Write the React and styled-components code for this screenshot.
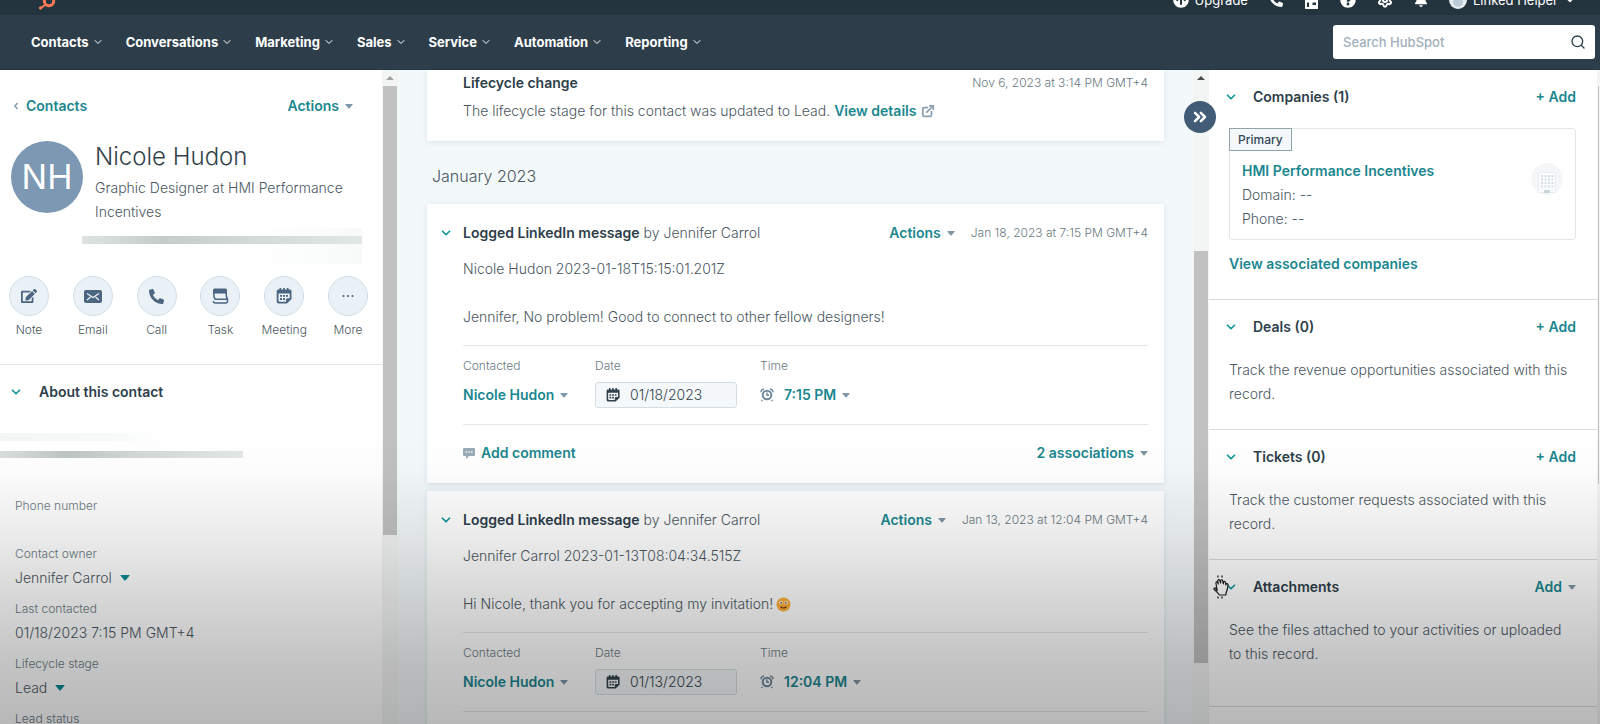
import React from "react";
import styled, { createGlobalStyle } from "styled-components";
import { FaEdit, FaPhoneAlt, FaArrowCircleUp, FaQuestionCircle, FaBell } from "react-icons/fa";
import { ChevronDown, ChevronLeft, ChevronsRight, ExternalLink, Search, Settings } from "lucide-react";

const menus = ["Contacts", "Conversations", "Marketing", "Sales", "Service", "Automation", "Reporting"];

const messages = [
  {
    id: "jan18",
    logged: "Jan 18, 2023 at 7:15 PM GMT+4",
    lead: "Nicole Hudon 2023-01-18T15:15:01.201Z",
    text: "Jennifer, No problem! Good to connect to other fellow designers!",
    date: "01/18/2023",
    time: "7:15 PM",
  },
  {
    id: "jan13",
    logged: "Jan 13, 2023 at 12:04 PM GMT+4",
    lead: "Jennifer Carrol 2023-01-13T08:04:34.515Z",
    text: "Hi Nicole, thank you for accepting my invitation!",
    smile: true,
    date: "01/13/2023",
    time: "12:04 PM",
  },
];

const Caret = ({ big, color = "#7f97a8" }) => (
  <svg width={big ? 10 : 8} height={big ? 6 : 5} viewBox="0 0 10 6" fill={color} aria-hidden="true">
    <path d="M1 0h8q1 0 .4.8L5.7 5.2q-.7.7-1.4 0L.6.8Q0 0 1 0z" />
  </svg>
);

const CalendarIcon = ({ size = 16 }) => (
  <svg width={size} height={size} viewBox="0 0 16 16" aria-hidden="true">
    <path
      fill="currentColor"
      fillRule="evenodd"
      d="M3.5 0h1.6v1.6h2V0h1.7v1.6h2V0h1.7v1.6H14q1.5 0 1.5 1.5V11L11 15.5H2.5Q.7 15.5.7 13.7V3.1Q.7 1.6 2.2 1.6h1.3zM2.5 5.5v7q0 1.2 1.2 1.2H10v-2q0-1.5 1.5-1.5h2.2V5.5z"
    />
    <path fill="currentColor" d="M4 7h2v1.8H4zM7 7h2v1.8H7zM10 7h2v1.8h-2zM4 10h2v2H4zM7 10h2v2H7z" />
  </svg>
);

const EmailIcon = () => (
  <svg width="18" height="13" viewBox="0 0 18 13" aria-hidden="true">
    <rect width="18" height="13" rx="2" fill="currentColor" />
    <path d="M3 3.5l6 4 6-4M3 10l3.5-3M15 10l-3.5-3" fill="none" stroke="#eaf0f6" strokeWidth="1.3" />
  </svg>
);

const TaskIcon = () => (
  <svg width="17" height="16" viewBox="0 0 17 16" aria-hidden="true">
    <path d="M2.5.5h11q1.5 0 1.5 1.5v3.5H1V2Q1 .5 2.5.5z" fill="currentColor" />
    <path
      d="M1.8 5q-.2 4 1.2 6.3H15.5M14.2 5q-.2 3.5 1.3 6.3.6 3.7-2 3.7H3.5Q1.5 15 1 13.3"
      fill="none"
      stroke="currentColor"
      strokeWidth="1.5"
    />
  </svg>
);

const MoreIcon = () => (
  <svg width="12" height="4" viewBox="0 0 12 4" fill="currentColor" aria-hidden="true">
    <circle cx="1.5" cy="2" r="1.1" />
    <circle cx="6" cy="2" r="1.1" />
    <circle cx="10.5" cy="2" r="1.1" />
  </svg>
);

const AlarmIcon = () => (
  <svg width="14" height="14" viewBox="0 0 14 14" fill="none" stroke="#71889b" aria-hidden="true">
    <circle cx="7" cy="7" r="4.3" strokeWidth="2" />
    <path d="M7 4.5V7.3h2M1 4.3Q1 1.3 4 1M13 4.3Q13 1.3 10 1M2.5 12l-1 1M11.5 12l1 1" strokeWidth="1.4" />
  </svg>
);

const CommentIcon = () => (
  <svg width="12" height="11" viewBox="0 0 12 11" aria-hidden="true">
    <path d="M1 0h10q1 0 1 1v6q0 1-1 1H6l-3 3V8H1Q0 8 0 7V1q0-1 1-1z" fill="#9aabb8" />
    <path d="M2.5 4H4M5.3 4h1.5M8 4h1.5" stroke="#fff" strokeWidth="1.3" />
  </svg>
);

const SmileIcon = () => (
  <svg width="15" height="15" viewBox="0 0 15 15" role="img" aria-label="Smile">
    <circle cx="7.5" cy="7.5" r="7" fill="#ffb03a" />
    <circle cx="5" cy="5.6" r="1.7" fill="#fff" />
    <circle cx="10" cy="5.6" r="1.7" fill="#fff" />
    <circle cx="5.2" cy="5.8" r=".8" fill="#4b2d12" />
    <circle cx="9.8" cy="5.8" r=".8" fill="#4b2d12" />
    <path d="M4.5 9.8q3 2.4 6 0" fill="none" stroke="#6b3a12" strokeWidth="1.2" />
  </svg>
);

const BuildingIcon = () => (
  <svg width="32" height="32" viewBox="0 0 32 32" aria-hidden="true">
    <circle cx="16" cy="16" r="16" fill="#f5f6f7" />
    <rect x="7.5" y="9.5" width="17" height="20" rx="1" fill="#fbfcfd" stroke="#e8edf0" />
    <path d="M10 13h13M10 16.5h13M10 20h13M10 23.5h13" stroke="#d5dee4" strokeWidth="2" strokeDasharray="2 1.5" />
    <path d="M13 27h6v3h-6z" fill="#c9d3da" />
  </svg>
);

const MarketIcon = () => (
  <svg width="15" height="17" viewBox="0 0 15 17" aria-hidden="true">
    <path
      d="M1 1h13v7H1zM1 8h13v9H1zM3 10.5V15h2v-4.500zM8.500 10.500V13H12v-2.500z"
      fill="currentColor"
      fillRule="evenodd"
    />
  </svg>
);

const Sprocket = () => (
  <svg width="20" height="24" viewBox="0 0 20 24" fill="none" stroke="#ff7a59" aria-hidden="true">
    <circle cx="12" cy="15" r="4.7" strokeWidth="3" />
    <path d="M12 10V4M8.5 18.5L4 22M8.5 12L1.5 6" strokeWidth="2" />
    <circle cx="12" cy="3" r="1.5" fill="#ff7a59" />
    <circle cx="3.5" cy="22" r="1.2" fill="#ff7a59" />
  </svg>
);

const GrabHand = () => (
  <svg width="16" height="24" viewBox="0 0 16 24" aria-hidden="true">
    <path d="M4 1.5h2M8 1.5h2M4 22.5h2M8 22.5h2" stroke="#6d7276" strokeWidth="2" />
    <path
      d="M4.2 15.5L3 8.5Q2.8 6.5 4.2 6.5L5.3 9 4.8 6q.2-1.7 1.8-1.2L7.7 8 7.6 5.6q.6-1.4 1.9-.5L10.3 9l.2-2q1-1.2 1.9.2l.4 2.8.6-1.2q1.3-.5 1.6.9-.2 4-1.6 7.3L12.7 20H6.5Q4 16.8 1 14.3q-.3-1.6 1.3-1.5z"
      fill="#fff"
      stroke="#1d1d1d"
      strokeWidth="1.2"
      strokeLinejoin="round"
    />
  </svg>
);

const ScrollBar = ({ parts, dark, children }) => (
  <Track $parts={parts}>
    <Arrow $dark={dark} />
    <span />
    <Thumb />
    {children}
  </Track>
);

const actions = [
  ["Note", <FaEdit size={16} />],
  ["Email", <EmailIcon />],
  ["Call", <FaPhoneAlt size={15} />],
  ["Task", <TaskIcon />],
  ["Meeting", <CalendarIcon size={16} />],
  ["More", <MoreIcon />],
];

const Property = ({ label, value, menu }) => (
  <PropertyItem>
    <Label as="dt">{label}</Label>
    <PropertyValue $empty={!value}>
      {menu ? (
        <PlainButton>
          {value}
          <Caret big color="#078a92" />
        </PlainButton>
      ) : (
        value
      )}
    </PropertyValue>
  </PropertyItem>
);

const Message = ({ item }) => (
  <Card>
    <Toggle aria-label="Collapse message">
      <ChevronDown size={14} strokeWidth={3} />
    </Toggle>
    <CardContent>
      <CardHeader>
        <p>
          <strong>Logged LinkedIn message</strong> by Jennifer Carrol
        </p>
        <CardMeta>
          <LinkButton>
            Actions
            <Caret />
          </LinkButton>
          <Stamp>{item.logged}</Stamp>
        </CardMeta>
      </CardHeader>
      <MessageBody>
        <p>{item.lead}</p>
        <MessageText>
          {item.text}
          {item.smile && <SmileIcon />}
        </MessageText>
      </MessageBody>
      <Fields>
        <div>
          <Label>Contacted</Label>
          <FieldValue>
            <LinkButton>
              Nicole Hudon
              <Caret />
            </LinkButton>
          </FieldValue>
        </div>
        <div>
          <Label as="label" htmlFor={item.id}>
            Date
          </Label>
          <DateBox>
            <CalendarIcon size={14} />
            <DateInput id={item.id} defaultValue={item.date} />
          </DateBox>
        </div>
        <div>
          <Label>Time</Label>
          <FieldValue>
            <AlarmIcon />
            <LinkButton>
              {item.time}
              <Caret />
            </LinkButton>
          </FieldValue>
        </div>
      </Fields>
      <CardFooter>
        <LinkButton>
          <CommentIcon />
          Add comment
        </LinkButton>
        <LinkButton>
          2 associations
          <Caret />
        </LinkButton>
      </CardFooter>
    </CardContent>
  </Card>
);

const SideSection = ({ title, menu, tall, children }) => (
  <Section $tall={tall}>
    <SectionHeader>
      <Toggle aria-label={`Toggle ${title}`}>
        <ChevronDown size={14} strokeWidth={3} />
      </Toggle>
      <h2>{title}</h2>
      <LinkButton>
        {menu ? "Add" : "+ Add"}
        {menu && <Caret />}
      </LinkButton>
    </SectionHeader>
    <SectionBody>{children}</SectionBody>
  </Section>
);

const App = () => {
  return (
    <Page>
      <GlobalStyle />
      <TopBar>
        <Sprocket />
        <Tools>
          <Tool>
            <FaArrowCircleUp size={16} />
            Upgrade
          </Tool>
          <Tool aria-label="Calling">
            <FaPhoneAlt size={14} />
          </Tool>
          <Tool aria-label="Marketplace">
            <MarketIcon />
          </Tool>
          <Tool aria-label="Help">
            <FaQuestionCircle size={16} />
          </Tool>
          <Tool aria-label="Settings">
            <Settings size={16} strokeWidth={3} />
          </Tool>
          <Tool aria-label="Notifications">
            <FaBell size={14} />
          </Tool>
          <Tool>
            <UserDot />
            Linked Helper
            <ChevronDown size={12} strokeWidth={3} />
          </Tool>
        </Tools>
      </TopBar>
      <NavBar>
        <Menus>
          {menus.map((name) => (
            <MenuButton key={name}>
              {name}
              <ChevronDown size={12} strokeWidth={2} />
            </MenuButton>
          ))}
        </Menus>
        <SearchBox>
          <input type="text" aria-label="Search HubSpot" placeholder="Search HubSpot" />
          <Search size={16} strokeWidth={2} />
        </SearchBox>
      </NavBar>

      <Body>
        <Panel>
          <PanelTop>
            <BackLink href="#contacts">
              <ChevronLeft size={10} strokeWidth={3} />
              Contacts
            </BackLink>
            <LinkButton>
              Actions
              <Caret />
            </LinkButton>
          </PanelTop>
          <Person>
            <Avatar>NH</Avatar>
            <div>
              <h1>Nicole Hudon</h1>
              <p>Graphic Designer at HMI Performance Incentives</p>
            </div>
          </Person>
          <EmailSmudge />
          <ActionRow>
            {actions.map(([name, icon]) => (
              <ActionButton key={name}>
                <Disc>{icon}</Disc>
                {name}
              </ActionButton>
            ))}
          </ActionRow>
          <AboutHeader>
            <Toggle aria-label="Toggle About this contact">
              <ChevronDown size={14} strokeWidth={3} />
            </Toggle>
            <h2>About this contact</h2>
          </AboutHeader>
          <AboutSmudge />
          <Properties>
            <Property label="Phone number" />
            <Property label="Contact owner" value="Jennifer Carrol" menu />
            <Property label="Last contacted" value="01/18/2023 7:15 PM GMT+4" />
            <Property label="Lifecycle stage" value="Lead" menu />
            <Property label="Lead status" />
          </Properties>
        </Panel>
        <ScrollBar parts="0fr 449fr 189fr" />

        <Feed>
          <Card $first>
            <span />
            <CardContent>
              <CardHeader>
                <strong>Lifecycle change</strong>
                <Stamp>Nov 6, 2023 at 3:14 PM GMT+4</Stamp>
              </CardHeader>
              <ChangeText>
                The lifecycle stage for this contact was updated to Lead.{" "}
                <TextLink href="#details">
                  View details
                  <ExternalLink size={14} strokeWidth={3} color="#8a9fb0" />
                </TextLink>
              </ChangeText>
            </CardContent>
          </Card>
          <Month>January 2023</Month>
          {messages.map((item) => (
            <Message key={item.id} item={item} />
          ))}
        </Feed>
        <ScrollBar parts="165fr 412fr 61fr" dark>
          <Collapse aria-label="Collapse sidebar">
            <ChevronsRight size={20} strokeWidth={3} />
          </Collapse>
        </ScrollBar>

        <Side>
          <SideSection title="Companies (1)">
            <Company>
              <Tag>Primary</Tag>
              <CompanyInfo>
                <div>
                  <TextLink href="#company">HMI Performance Incentives</TextLink>
                  <p>Domain: --</p>
                  <p>Phone: --</p>
                </div>
                <BuildingIcon />
              </CompanyInfo>
            </Company>
            <TextLink href="#companies">View associated companies</TextLink>
          </SideSection>
          <SideSection title="Deals (0)">
            <p>Track the revenue opportunities associated with this record.</p>
          </SideSection>
          <SideSection title="Tickets (0)">
            <p>Track the customer requests associated with this record.</p>
          </SideSection>
          <SideSection title="Attachments" menu tall>
            <p>See the files attached to your activities or uploaded to this record.</p>
            <Grab>
              <GrabHand />
            </Grab>
          </SideSection>
        </Side>
        <Track $parts="0fr 398fr 240fr">
          <span />
          <span />
          <Thumb />
        </Track>
      </Body>
      <Shade />
    </Page>
  );
};

export default App;

const GlobalStyle = createGlobalStyle`
  * {
    box-sizing: border-box;
  }
  body {
    margin: 0;
    overflow: hidden;
    background: #fff;
    color: #4a575f;
    font: 300 14px/24px Inter, "Liberation Sans", sans-serif;
  }
  h1, h2, p, dl, dd {
    margin: 0;
  }
  button, input {
    font: inherit;
    color: inherit;
    border: 0;
    padding: 0;
    background: none;
  }
  button {
    cursor: pointer;
  }
  svg {
    flex-shrink: 0;
  }
  strong, h2 {
    font-size: 14px;
    font-weight: 600;
    color: #2d3e4a;
  }
`;

const Page = styled.div`
  height: 100vh;
  display: flex;
  flex-direction: column;
  overflow: hidden;
`;

const TopBar = styled.header`
  height: 15px;
  padding: 0 24px 5px 37px;
  display: flex;
  align-items: flex-end;
  justify-content: space-between;
  overflow: hidden;
  background: #24343e;
`;

const Tools = styled.div`
  display: flex;
  align-items: flex-end;
  gap: 21px;
`;

const Tool = styled.button`
  display: flex;
  align-items: center;
  gap: 6px;
  height: 20px;
  color: #fff;
  font-size: 13px;
  font-weight: 400;
`;

const UserDot = styled.span`
  width: 18px;
  height: 18px;
  border-radius: 50%;
  background: radial-gradient(circle at 50% 60%, #b9cbd8 30%, #e6edf2 40%);
`;

const NavBar = styled.nav`
  height: 55px;
  padding: 0 5px 0 31px;
  display: flex;
  align-items: center;
  justify-content: space-between;
  background: #2d3e4a;
  border-bottom: 1px solid #20394c;
`;

const Menus = styled.div`
  display: flex;
  gap: 22px;
`;

const MenuButton = styled.button`
  display: flex;
  align-items: center;
  gap: 3px;
  color: #fff;
  font-size: 13px;
  font-weight: 700;
`;

const SearchBox = styled.label`
  width: 262px;
  height: 34px;
  padding: 0 9px 0 10px;
  display: flex;
  align-items: center;
  border-radius: 3px;
  background: #fff;
  color: #2d3e4a;

  input {
    flex: 1;
    min-width: 0;
    outline: 0;
    font-size: 13px;
    font-weight: 500;
  }
  input::placeholder {
    color: #9fb0be;
  }
`;

const Body = styled.main`
  flex: 1;
  min-height: 0;
  display: grid;
  grid-template-columns: 382px 16px minmax(0, 1fr) 16px 388px 3px;
  grid-template-rows: minmax(0, 1fr);
`;

const Track = styled.div`
  position: relative;
  display: grid;
  grid-template-rows: 16px ${(p) => p.$parts};
  background: #f3f4f4;
`;

const Arrow = styled.span`
  place-self: center;
  border: 4px solid transparent;
  border-top: 0;
  border-bottom-color: ${(p) => (p.$dark ? "#4a4a4a" : "#a3a3a3")};
`;

const Thumb = styled.span`
  margin: 0 1px;
  background: #c1c1c1;
`;

const Panel = styled.aside`
  overflow: hidden;
  background: #fff;
`;

const PanelTop = styled.div`
  padding: 24px 29px 23px 11px;
  display: flex;
  justify-content: space-between;
`;

const PlainButton = styled.button`
  display: inline-flex;
  align-items: center;
  gap: 8px;
`;

const LinkButton = styled.button`
  display: inline-flex;
  align-items: center;
  gap: 6px;
  line-height: 24px;
  color: #1b8790;
  font-weight: 600;
`;

const TextLink = styled.a`
  display: inline-flex;
  align-items: center;
  gap: 5px;
  color: #1b8790;
  font-weight: 600;
  text-decoration: none;
`;

const BackLink = styled(TextLink)`
  svg {
    color: #7391a5;
  }
`;

const Person = styled.div`
  padding: 0 16px 0 11px;
  display: flex;
  gap: 12px;

  h1 {
    margin-bottom: 3px;
    font-size: 24px;
    font-weight: 300;
    line-height: 32px;
    color: #33424c;
  }
`;

const Avatar = styled.div`
  width: 72px;
  height: 72px;
  flex-shrink: 0;
  border-radius: 50%;
  background: #7c98b2;
  color: #fff;
  font-size: 34px;
  font-weight: 400;
  line-height: 72px;
  text-align: center;
`;

const EmailSmudge = styled.div`
  height: 40px;
  margin: 0 20px 12px 82px;
  background:
    linear-gradient(90deg, #dfe2e2, #c5cccc 28%, #d3d9d9 60%, #e1e6e6) 0 12px / 100% 8px no-repeat,
    linear-gradient(90deg, transparent 60%, #f8fafa) 0 4px / 100% 36px no-repeat;
`;

const ActionRow = styled.div`
  padding: 0 14px 25px 9px;
  display: flex;
  justify-content: space-between;
  border-bottom: 1px solid #e3e5e6;
`;

const ActionButton = styled.button`
  width: 40px;
  display: flex;
  flex-direction: column;
  align-items: center;
  gap: 5px;
  font-size: 12px;
  line-height: 18px;
`;

const Disc = styled.span`
  width: 40px;
  height: 40px;
  display: grid;
  place-items: center;
  border: 1px solid #d3dee6;
  border-radius: 50%;
  background: #eaf2f8;
  color: #4c6580;
`;

const Toggle = styled.button`
  width: 14px;
  height: 24px;
  display: grid;
  place-items: center;
  color: #12979c;
`;

const AboutHeader = styled.div`
  padding: 15px 9px;
  display: flex;
  gap: 16px;
`;

const AboutSmudge = styled.div`
  height: 48px;
  margin-bottom: 30px;
  background:
    linear-gradient(90deg, #dcdfdf, #bfc5c5 27%, #d5d9d9 60%, #e4e7e7) 0 32px / 243px 7px no-repeat,
    linear-gradient(90deg, #f4f6f6, #f7f9f9 60%, transparent) 0 14px / 170px 8px no-repeat;
`;

const Properties = styled.dl`
  padding: 0 15px;
  display: grid;
  gap: 10px;
`;

const PropertyItem = styled.div`
  display: grid;
  gap: 3px;
`;

const Label = styled.span`
  display: block;
  color: #6a7a82;
  font-size: 12px;
  line-height: 18px;
`;

const PropertyValue = styled.dd`
  height: ${(p) => (p.$empty ? "17px" : "24px")};
`;

const Feed = styled.section`
  padding: 0 29px;
  overflow: hidden;
  background: #f3f8f9;
`;

const Card = styled.article`
  margin-bottom: 8px;
  padding: ${(p) => (p.$first ? "1px" : "17px")} 16px 18px 12px;
  display: grid;
  grid-template-columns: 24px minmax(0, 1fr);
  align-items: start;
  background: #fff;
  box-shadow: 0 1px 5px rgba(70, 100, 110, 0.13);
`;

const CardContent = styled.div`
  min-width: 0;
`;

const CardHeader = styled.header`
  display: flex;
  align-items: center;
  justify-content: space-between;
`;

const CardMeta = styled.div`
  display: flex;
  align-items: center;
  gap: 16px;
`;

const Stamp = styled.time`
  color: #6a7a82;
  font-size: 12px;
`;

const ChangeText = styled.p`
  margin-top: 4px;
`;

const Month = styled.h3`
  margin: 0;
  padding: 15px 5px 16px;
  font-size: 16px;
  font-weight: 300;
  line-height: 24px;
`;

const MessageBody = styled.div`
  padding: 12px 0 16px;
  border-bottom: 1px solid #e3e7e9;
`;

const MessageText = styled.p`
  margin-top: 24px;
  display: flex;
  align-items: center;
  gap: 3px;
`;

const Fields = styled.div`
  padding: 11px 0 16px;
  display: grid;
  grid-template-columns: 132px 165px minmax(0, 1fr);
  border-bottom: 1px solid #e3e7e9;
`;

const FieldValue = styled.div`
  height: 26px;
  margin-top: 7px;
  display: flex;
  align-items: center;
  gap: 10px;
`;

const DateBox = styled.div`
  width: 142px;
  height: 26px;
  margin-top: 7px;
  padding: 0 10px;
  display: flex;
  align-items: center;
  gap: 10px;
  border: 1px solid #d5dee4;
  border-radius: 3px;
  background: #f5f8fa;
  color: #33424c;
`;

const DateInput = styled.input`
  flex: 1;
  min-width: 0;
  outline: 0;
`;

const CardFooter = styled.footer`
  padding-top: 16px;
  display: flex;
  justify-content: space-between;
`;

const Collapse = styled.button`
  position: absolute;
  top: 31px;
  left: -9px;
  z-index: 1;
  width: 32px;
  height: 32px;
  display: grid;
  place-items: center;
  border-radius: 50%;
  background: #425b76;
  color: #fff;
`;

const Side = styled.aside`
  overflow: hidden;
  background: #fff;
`;

const Section = styled.section`
  position: relative;
  padding: 15px 21px ${(p) => (p.$tall ? "40px" : "23px")} 20px;
  border-bottom: 1px solid #d9dddf;
`;

const SectionHeader = styled.div`
  margin: 0 0 19px -5px;
  display: flex;
  gap: 15px;

  h2 {
    flex: 1;
  }
`;

const SectionBody = styled.div`
  a {
    display: block;
  }
`;

const Company = styled.div`
  margin-bottom: 12px;
  border: 1px solid #e3e7ea;
  border-radius: 3px;
`;

const Tag = styled.span`
  display: inline-block;
  margin: -1px;
  padding: 0 8px;
  border: 1px solid #8fa5a9;
  background: #f5f8fa;
  color: #33475b;
  font-size: 12px;
  font-weight: 500;
  line-height: 21px;
  vertical-align: top;
`;

const CompanyInfo = styled.div`
  padding: 6px 12px 8px;
  display: flex;
  align-items: flex-start;
  justify-content: space-between;

  svg {
    margin-top: 4px;
  }
`;

const Grab = styled.span`
  position: absolute;
  top: 15px;
  left: 4px;
  display: flex;
`;

const Shade = styled.div`
  position: fixed;
  inset: auto 0 0;
  z-index: 2;
  height: 40vh;
  pointer-events: none;
  background: linear-gradient(
    rgba(0, 0, 0, 0),
    rgba(0, 0, 0, 0.01) 12%,
    rgba(0, 0, 0, 0.08) 35%,
    rgba(0, 0, 0, 0.16) 57%,
    rgba(0, 0, 0, 0.23) 78%,
    rgba(0, 0, 0, 0.28)
  );
`;
